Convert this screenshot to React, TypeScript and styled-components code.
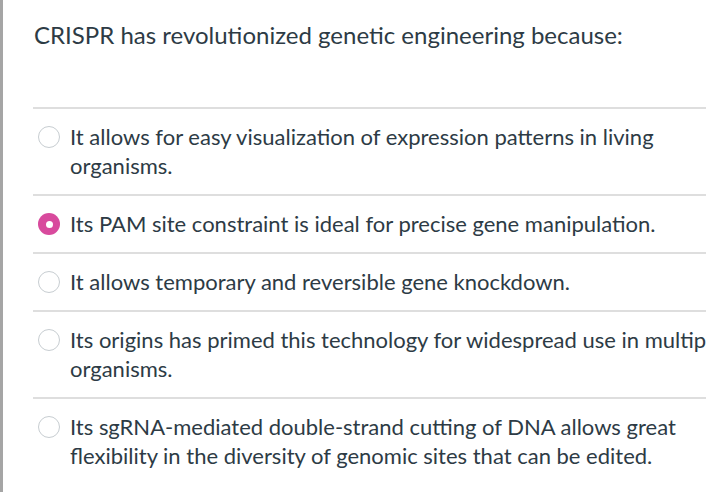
import React from "react";
import styled, { createGlobalStyle } from "styled-components";

const GlobalStyle = createGlobalStyle`
  html, body { margin: 0; padding: 0; background: #ffffff; overflow: hidden; }
  body { font-family: Lato, "Noto Sans", sans-serif; color: #2d3b45; }
`;

const Page = styled.div`
  width: 706px;
  height: 492px;
  overflow: hidden;
  box-sizing: border-box;
  border-left: 3px solid #a5a5a5;
`;

const Content = styled.div`
  width: 707px;
  padding-left: 30px;
`;

const Question = styled.div`
  box-sizing: border-box;
  font-size: 24px;
  line-height: 30px;
  padding: 20px 0 0 1px;
  height: 107px;
`;

const Answers = styled.div`
  display: flex;
  flex-direction: column;
`;

const Answer = styled.label`
  display: flex;
  align-items: flex-start;
  gap: 10px;
  border-top: 2px solid #dedede;
  padding: 13px 0 14px 5px;
  font-size: 22px;
  line-height: 29px;
`;

const Radio = styled.span<{ $checked?: boolean }>`
  flex: none;
  box-sizing: border-box;
  width: 22px;
  height: 22px;
  margin-top: 4px;
  border-radius: 50%;
  background: ${(p) => (p.$checked ? "#d84a9d" : "#ffffff")};
  border: ${(p) => (p.$checked ? "none" : "1.5px solid #c7cdd1")};
  display: flex;
  align-items: center;
  justify-content: center;
  &::after {
    content: "";
    display: ${(p) => (p.$checked ? "block" : "none")};
    width: 7px;
    height: 7px;
    border-radius: 50%;
    background: #ffffff;
  }
`;

const AnswerText = styled.span`
  flex: 1;
`;

const options = [
  { text: "It allows for easy visualization of expression patterns in living organisms." },
  { text: "Its PAM site constraint is ideal for precise gene manipulation.", checked: true },
  { text: "It allows temporary and reversible gene knockdown." },
  { text: "Its origins has primed this technology for widespread use in multiple organisms." },
  {
    text: "Its sgRNA-mediated double-strand cutting of DNA allows great flexibility in the diversity of genomic sites that can be edited.",
  },
];

export default function App() {
  return (
    <>
      <GlobalStyle />
      <Page>
        <Content>
          <Question>CRISPR has revolutionized genetic engineering because:</Question>
          <Answers>
            {options.map((o, i) => (
              <Answer key={i}>
                <Radio $checked={o.checked} />
                <AnswerText>{o.text}</AnswerText>
              </Answer>
            ))}
          </Answers>
        </Content>
      </Page>
    </>
  );
}
